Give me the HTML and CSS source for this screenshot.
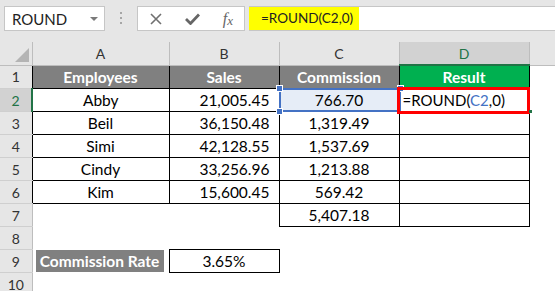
FILE: index.html
```html
<!DOCTYPE html>
<html lang="en">
<head>
    <meta charset="UTF-8">
    <title>ROUND</title>
    <link rel="stylesheet" href="styles.css">
</head>
<body>
    <div class="toolbar">
        <div class="namebox">
            <span>ROUND</span>
            <svg class="drop" width="8" height="4" viewBox="0 0 8 4"><path d="M0 0 H8 L4 4 Z" fill="#7a7a7a"/></svg>
        </div>
        <div class="grip">
            <svg width="3" height="13" viewBox="0 0 3 13">
                <rect x="0" y="0" width="2" height="2" fill="#a6a6a6"/>
                <rect x="0" y="5" width="2" height="2" fill="#a6a6a6"/>
                <rect x="0" y="10" width="2" height="2" fill="#a6a6a6"/>
            </svg>
        </div>
        <div class="fxbtns">
            <svg width="12" height="12" viewBox="0 0 12 12"><path d="M1 1 L11 11 M11 1 L1 11" stroke="#707070" stroke-width="1.6"/></svg>
            <svg width="15" height="12" viewBox="0 0 15 12"><path d="M1 6 L5.5 10.5 L14 1.5" stroke="#666" stroke-width="2.8" fill="none"/></svg>
            <span class="fx">f<span class="x">x</span></span>
        </div>
        <div class="formula"><span class="hl">=ROUND(C2,0)</span></div>
    </div>

    <table class="sheet">
        <colgroup>
            <col class="c-rh"><col class="c-a"><col class="c-b"><col class="c-c"><col class="c-d"><col class="c-e">
        </colgroup>
        <thead>
            <tr>
                <th class="corner"><span class="tri"></span></th>
                <th>A</th>
                <th>B</th>
                <th>C</th>
                <th class="active">D</th>
                <th></th>
            </tr>
        </thead>
        <tbody>
            <tr>
                <th class="rh edge">1</th>
                <td class="b head">Employees</td>
                <td class="b head">Sales</td>
                <td class="b head">Commission</td>
                <td class="b result">Result</td>
                <td></td>
            </tr>
            <tr>
                <th class="rh cur">2</th>
                <td class="b mid">Abby</td>
                <td class="b num">21,005.45</td>
                <td class="b mid sel"><span class="selbox"><i class="h tl"></i><i class="h tr"></i><i class="h bl"></i></span>766.70</td>
                <td class="b edit"><span class="mark"></span>=ROUND(<span class="ref">C2</span>,0)<i class="fill"></i></td>
                <td></td>
            </tr>
            <tr>
                <th class="rh edge">3</th>
                <td class="b mid">Beil</td>
                <td class="b num">36,150.48</td>
                <td class="b mid">1,319.49</td>
                <td class="b"></td>
                <td></td>
            </tr>
            <tr>
                <th class="rh edge">4</th>
                <td class="b mid">Simi</td>
                <td class="b num">42,128.55</td>
                <td class="b mid">1,537.69</td>
                <td class="b"></td>
                <td></td>
            </tr>
            <tr>
                <th class="rh edge">5</th>
                <td class="b mid">Cindy</td>
                <td class="b num">33,256.96</td>
                <td class="b mid">1,213.88</td>
                <td class="b"></td>
                <td></td>
            </tr>
            <tr>
                <th class="rh edge">6</th>
                <td class="b mid">Kim</td>
                <td class="b num">15,600.45</td>
                <td class="b mid">569.42</td>
                <td class="b"></td>
                <td></td>
            </tr>
            <tr>
                <th class="rh">7</th>
                <td></td>
                <td></td>
                <td class="b mid">5,407.18</td>
                <td class="b"></td>
                <td></td>
            </tr>
            <tr>
                <th class="rh">8</th>
                <td></td><td></td><td></td><td></td><td></td>
            </tr>
            <tr>
                <th class="rh">9</th>
                <td class="rate"><span>Commission Rate</span></td>
                <td class="b mid">3.65%</td>
                <td></td><td></td><td></td>
            </tr>
            <tr>
                <th class="rh">10</th>
                <td></td><td></td><td></td><td></td><td></td>
            </tr>
        </tbody>
    </table>
</body>
</html>
```

FILE: styles.css
```css
/* Page */
body {
    margin: 0;
    width: 555px;
    height: 291px;
    overflow: hidden;
    background: #fff;
    font-family: 'Lato', sans-serif;
    color: #000;
}

/* Formula bar */
.toolbar {
    display: flex;
    align-items: flex-start;
    height: 42px;
    padding-top: 6px;
    box-sizing: border-box;
    background: #e6e6e6;
}

.namebox {
    display: flex;
    align-items: center;
    justify-content: space-between;
    width: 101px;
    height: 25px;
    margin-left: 4px;
    padding: 0 6px 0 7px;
    box-sizing: border-box;
    background: #fff;
    border: 1px solid #c6c6c6;
    font-size: 15px;
    color: #222;
}

.grip {
    width: 32px;
    height: 25px;
    display: flex;
    align-items: center;
    justify-content: center;
}

.fxbtns {
    display: flex;
    align-items: center;
    justify-content: space-between;
    width: 108px;
    height: 25px;
    padding: 0 11px 0 12px;
    box-sizing: border-box;
    background: #fff;
    border: 1px solid #c6c6c6;
}

.fx {
    font-family: 'Liberation Serif', serif;
    font-style: italic;
    font-size: 16px;
    color: #666;
    line-height: 1;
}

.fx .x {
    font-size: 13px;
    position: relative;
    top: 1px;
}

.formula {
    flex: 1;
    height: 25px;
    margin-left: 4px;
    box-sizing: border-box;
    background: #fff;
    border-top: 1px solid #c6c6c6;
    border-bottom: 1px solid #c6c6c6;
}

.formula .hl {
    display: inline-block;
    width: 110px;
    height: 23px;
    line-height: 23px;
    padding-left: 12px;
    box-sizing: border-box;
    background: #ffff00;
    font-size: 13.5px;
    color: #222;
}

/* Sheet grid */
.sheet {
    border-collapse: collapse;
    table-layout: fixed;
    width: 580px;
    font-size: 15.5px;
}

.c-rh { width: 32px; }
.c-a { width: 137px; }
.c-b { width: 110px; }
.c-c { width: 120px; }
.c-d { width: 130px; }
.c-e { width: 51px; }

.sheet th,
.sheet td {
    height: 22px;
    padding: 0;
    white-space: nowrap;
    overflow: visible;
}

.sheet thead th {
    background: #e6e6e6;
    border-right: 1px solid #bdbdbd;
    border-bottom: 1px solid #bdbdbd;
    font-weight: normal;
    font-size: 14px;
    color: #333;
}

.sheet thead th.active {
    background: #d2d2d2;
    color: #217346;
    border-bottom: 2px solid #217346;
}

.corner {
    position: relative;
}

.tri {
    position: absolute;
    right: 3px;
    bottom: 3px;
    width: 0;
    height: 0;
    border-left: 14px solid transparent;
    border-bottom: 14px solid #b4b4b4;
}

.rh {
    background: #e6e6e6;
    border-right: 1px solid #bdbdbd;
    border-bottom: 1px solid #cfcfcf;
    font-weight: normal;
    font-size: 14px;
    color: #333;
}

.rh.edge {
    border-right-color: #000;
}

.rh.cur {
    background: #d2d2d2;
    color: #217346;
    border-right: 2px solid #217346;
}

/* Cells */
.b {
    border: 1px solid #000;
}

.head {
    background: #808080;
    color: #fff;
    font-weight: bold;
    text-align: center;
}

.result {
    background: #00b050;
    color: #fff;
    font-weight: bold;
    text-align: center;
}

.mid {
    text-align: center;
}

.num {
    text-align: right;
    padding-right: 9px !important;
}

.sel {
    position: relative;
    background: #e6edf7;
}

.selbox {
    position: absolute;
    left: -1px;
    top: -1px;
    right: -2px;
    bottom: -1px;
    border: 2px solid #4472c4;
}

.h {
    position: absolute;
    width: 5px;
    height: 5px;
    background: #4472c4;
    border: 1px solid #fff;
}

.h.tl { left: -5px; top: -5px; }
.h.tr { right: -5px; top: -5px; }
.h.bl { left: -5px; bottom: -5px; }

.edit {
    position: relative;
    padding-left: 3px !important;
    font-size: 15px;
}

.ref {
    color: #4472c4;
}

.mark {
    position: absolute;
    left: -3px;
    top: -2px;
    right: -1px;
    bottom: -3px;
    border: 3px solid #ff0000;
}

.fill {
    position: absolute;
    right: -3px;
    bottom: -2px;
    width: 3px;
    height: 3px;
    background: #217346;
}

.rate {
    padding: 0 5px 0 3px !important;
}

.rate span {
    display: block;
    height: 22px;
    line-height: 22px;
    background: #808080;
    color: #fff;
    font-weight: bold;
    text-align: center;
}
```
